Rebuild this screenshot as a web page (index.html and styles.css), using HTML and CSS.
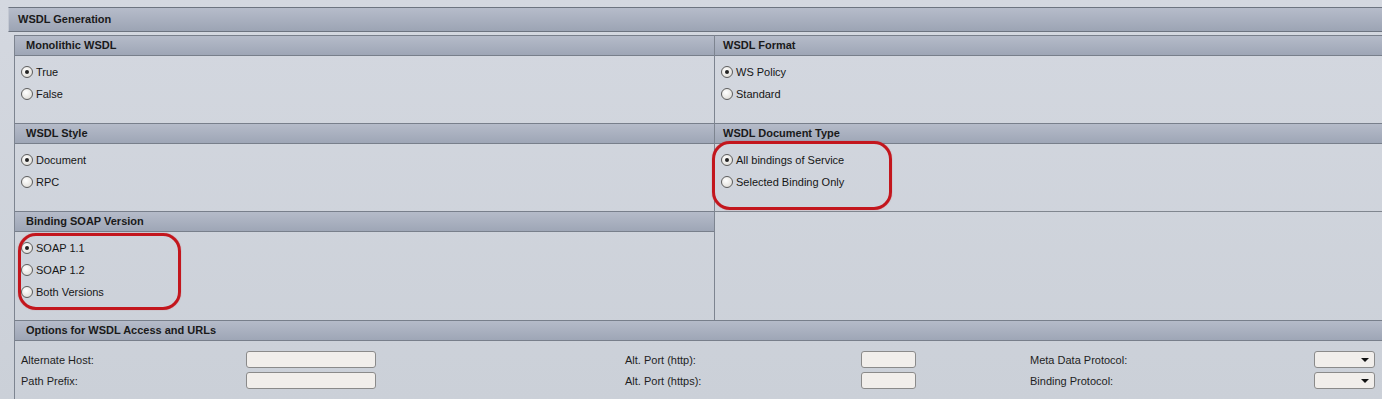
FILE: index.html
```html
<!DOCTYPE html>
<html>
<head>
<meta charset="utf-8">
<link rel="stylesheet" href="styles.css">
</head>
<body>
<div class="page">
  <div class="main-head">WSDL Generation</div>
  <div class="panels">
    <div class="panel left">
      <div class="phead">Monolithic WSDL</div>
      <div class="pbody">
        <div class="opt"><span class="radio on"></span>True</div>
        <div class="opt"><span class="radio"></span>False</div>
      </div>
    </div>
    <div class="panel right">
      <div class="phead">WSDL Format</div>
      <div class="pbody">
        <div class="opt"><span class="radio on"></span>WS Policy</div>
        <div class="opt"><span class="radio"></span>Standard</div>
      </div>
    </div>
    <div class="panel left">
      <div class="phead">WSDL Style</div>
      <div class="pbody">
        <div class="opt"><span class="radio on"></span>Document</div>
        <div class="opt"><span class="radio"></span>RPC</div>
      </div>
    </div>
    <div class="panel right">
      <div class="phead">WSDL Document Type</div>
      <div class="pbody">
        <div class="opt"><span class="radio on"></span>All bindings of Service</div>
        <div class="opt"><span class="radio"></span>Selected Binding Only</div>
        <div class="mark mark-doc"></div>
      </div>
    </div>
    <div class="panel left">
      <div class="phead">Binding SOAP Version</div>
      <div class="pbody tall soap">
        <div class="opt"><span class="radio on"></span>SOAP 1.1</div>
        <div class="opt"><span class="radio"></span>SOAP 1.2</div>
        <div class="opt"><span class="radio"></span>Both Versions</div>
        <div class="mark mark-soap"></div>
      </div>
    </div>
    <div class="panel right empty"></div>
    <div class="panel full">
      <div class="phead">Options for WSDL Access and URLs</div>
      <div class="pbody opts">
        <span class="lbl">Alternate Host:</span><span class="inp"></span><span></span>
        <span class="lbl">Alt. Port (http):</span><span class="inp short"></span><span></span>
        <span class="lbl">Meta Data Protocol:</span><span class="sel"></span>
        <span class="lbl">Path Prefix:</span><span class="inp"></span><span></span>
        <span class="lbl">Alt. Port (https):</span><span class="inp short"></span><span></span>
        <span class="lbl">Binding Protocol:</span><span class="sel"></span>
      </div>
    </div>
  </div>
</div>
</body>
</html>
```
FILE: styles.css
```css
html, body {
  margin: 0;
  padding: 0;
}
body {
  width: 1382px;
  height: 399px;
  overflow: hidden;
  background: linear-gradient(#d4d8e0, #cbd0d8);
  font-family: "Liberation Sans", Arial, sans-serif;
  font-size: 11px;
  color: #151515;
}
.page {
  padding-top: 7px;
  padding-left: 8px;
}
.main-head {
  height: 23px;
  border-top: 1px solid #6d7480;
  border-bottom: 1px solid #6d7480;
  border-left: 1px solid #c3c8d2;
  background: linear-gradient(#b6bcca, #9ca4b4);
  font-weight: bold;
  line-height: 23px;
  padding-left: 9px;
  color: #1a1a1a;
}
.panels {
  margin-top: 3px;
  margin-left: 6px;
  display: grid;
  grid-template-columns: 699px 669px;
  border-left: 1px solid #7d8490;
}
.panel {
  position: relative;
}
.panel.right {
  border-left: 1px solid #7d8490;
}
.panel.full {
  grid-column: 1 / span 2;
}
.panel.empty {
  border-top: 1px solid #80868f;
}
.phead {
  height: 19px;
  line-height: 19px;
  border-top: 1px solid #787f8b;
  border-bottom: 1px solid #787f8b;
  background: linear-gradient(#b5bbc9, #9ea6b6);
  font-weight: bold;
  padding-left: 11px;
  color: #1a1a1a;
}
.panel.right .phead {
  padding-left: 8px;
}
.pbody {
  position: relative;
  height: 62px;
  padding-top: 5px;
  padding-left: 6px;
}
.pbody.tall {
  height: 83px;
}
.opt {
  display: flex;
  align-items: center;
  height: 22px;
  gap: 3px;
}
.radio {
  width: 10px;
  height: 10px;
  border: 1px solid #5d5d5d;
  border-radius: 50%;
  background: radial-gradient(circle at 40% 35%, #ffffff, #e4e2de 70%, #cfccc8);
  display: inline-flex;
  align-items: center;
  justify-content: center;
  box-sizing: content-box;
}
.radio.on::after {
  content: "";
  width: 4px;
  height: 4px;
  border-radius: 50%;
  background: #222;
}
.mark {
  position: absolute;
  border: 3px solid #c3161d;
  border-radius: 18px;
  box-shadow: 0 0 1px rgba(195, 22, 29, 0.6);
  pointer-events: none;
}
.mark-doc {
  left: -3px;
  top: -3px;
  width: 174px;
  height: 63px;
}
.mark-soap {
  left: 3px;
  top: 1px;
  width: 157px;
  height: 71px;
}
.pbody.opts {
  height: 57px;
  padding-top: 8px;
  padding-left: 6px;
  display: grid;
  grid-template-columns: 225px 130px 249px 236px 55px 114px 284px 61px;
  grid-auto-rows: 21px;
  align-items: center;
  align-content: start;
}
.lbl {
  color: #1e1e1e;
}
.inp, .sel {
  display: block;
  height: 15px;
  border: 1px solid #8a8a8a;
  border-radius: 3px;
  background: #f1eeeb;
  box-sizing: content-box;
  width: 128px;
}
.inp.short {
  width: 53px;
}
.sel {
  width: 59px;
  position: relative;
}
.sel::after {
  content: "";
  position: absolute;
  right: 5px;
  top: 6px;
  border-left: 4px solid transparent;
  border-right: 4px solid transparent;
  border-top: 4px solid #111;
}
```
